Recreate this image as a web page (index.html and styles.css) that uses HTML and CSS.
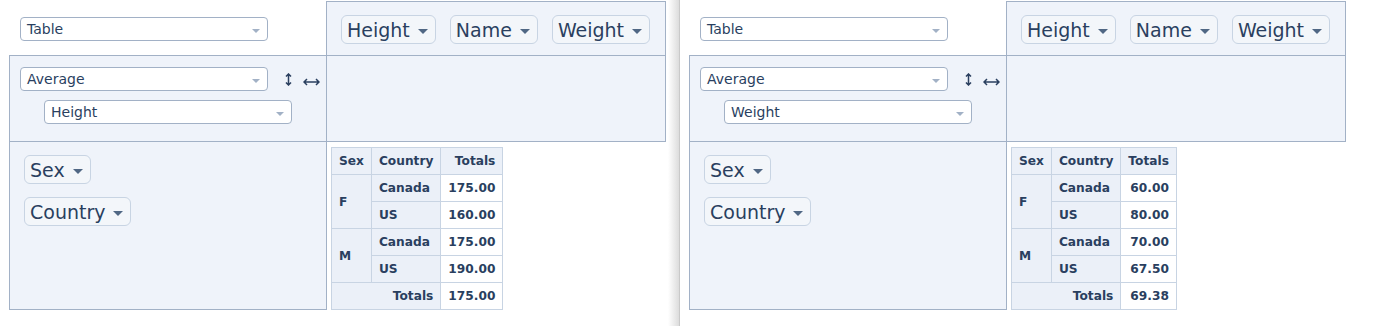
FILE: index.html
```
<!DOCTYPE html>
<html>
<head>
<meta charset="utf-8">
<link rel="stylesheet" href="styles.css">
</head>
<body>
<div class="split">
  <div class="pane">
    <div class="pivot">
      <div class="renderers">
        <div class="dd"><span>Table</span><i class="dd-icon"></i></div>
      </div>
      <div class="axis unused">
        <span class="attr">Height<i class="tri"></i></span>
        <span class="attr">Name<i class="tri"></i></span>
        <span class="attr">Weight<i class="tri"></i></span>
      </div>
      <div class="axis vals">
        <div class="vals-row">
          <div class="dd"><span>Average</span><i class="dd-icon"></i></div>
          <svg class="order-v" width="7" height="13" viewBox="0 0 7 13"><path d="M3.5 1v11M1 3.6 3.5 1 6 3.6M1 9.4 3.5 12 6 9.4" fill="none" stroke="#2a3f5f" stroke-width="1.5"/></svg>
          <svg class="order-h" width="17" height="8" viewBox="0 0 17 8"><path d="M1 4h15M4 1 1 4l3 3M13 1l3 3-3 3" fill="none" stroke="#2a3f5f" stroke-width="1.5"/></svg>
        </div>
        <div class="dd dd-attr"><span>Height</span><i class="dd-icon"></i></div>
      </div>
      <div class="axis cols"></div>
      <div class="axis rows">
        <span class="attr">Sex<i class="tri"></i></span>
        <span class="attr">Country<i class="tri"></i></span>
      </div>
      <div class="output">
        <table class="pvt">
          <thead>
            <tr><th>Sex</th><th>Country</th><th class="total-label">Totals</th></tr>
          </thead>
          <tbody>
            <tr><th rowspan="2">F</th><th>Canada</th><td>175.00</td></tr>
            <tr><th>US</th><td>160.00</td></tr>
            <tr><th rowspan="2">M</th><th>Canada</th><td>175.00</td></tr>
            <tr><th>US</th><td>190.00</td></tr>
            <tr><th colspan="2" class="total-label">Totals</th><td>175.00</td></tr>
          </tbody>
        </table>
      </div>
    </div>
  </div>
  <div class="divider"></div>
  <div class="pane">
    <div class="pivot">
      <div class="renderers">
        <div class="dd"><span>Table</span><i class="dd-icon"></i></div>
      </div>
      <div class="axis unused">
        <span class="attr">Height<i class="tri"></i></span>
        <span class="attr">Name<i class="tri"></i></span>
        <span class="attr">Weight<i class="tri"></i></span>
      </div>
      <div class="axis vals">
        <div class="vals-row">
          <div class="dd"><span>Average</span><i class="dd-icon"></i></div>
          <svg class="order-v" width="7" height="13" viewBox="0 0 7 13"><path d="M3.5 1v11M1 3.6 3.5 1 6 3.6M1 9.4 3.5 12 6 9.4" fill="none" stroke="#2a3f5f" stroke-width="1.5"/></svg>
          <svg class="order-h" width="17" height="8" viewBox="0 0 17 8"><path d="M1 4h15M4 1 1 4l3 3M13 1l3 3-3 3" fill="none" stroke="#2a3f5f" stroke-width="1.5"/></svg>
        </div>
        <div class="dd dd-attr"><span>Weight</span><i class="dd-icon"></i></div>
      </div>
      <div class="axis cols"></div>
      <div class="axis rows">
        <span class="attr">Sex<i class="tri"></i></span>
        <span class="attr">Country<i class="tri"></i></span>
      </div>
      <div class="output">
        <table class="pvt">
          <thead>
            <tr><th>Sex</th><th>Country</th><th class="total-label">Totals</th></tr>
          </thead>
          <tbody>
            <tr><th rowspan="2">F</th><th>Canada</th><td>60.00</td></tr>
            <tr><th>US</th><td>80.00</td></tr>
            <tr><th rowspan="2">M</th><th>Canada</th><td>70.00</td></tr>
            <tr><th>US</th><td>67.50</td></tr>
            <tr><th colspan="2" class="total-label">Totals</th><td>69.38</td></tr>
          </tbody>
        </table>
      </div>
    </div>
  </div>
</div>
</body>
</html>
```

FILE: styles.css
```
* { box-sizing: border-box; }

body {
  margin: 0;
  background: #fff;
  font-family: "DejaVu Sans", Verdana, sans-serif;
  color: #2a3f5f;
}

.split {
  display: flex;
  height: 326px;
}

.pane {
  width: 666px;
  flex: none;
}

.divider {
  width: 14px;
  flex: none;
  background: linear-gradient(to right, #ffffff 0px, #ffffff 2px, #dcdcdc 13px);
  border-right: 1px solid #c9c9c9;
}

.pivot {
  margin-left: 9px;
  display: grid;
  grid-template-columns: 317px 340px;
  grid-template-rows: 55px 86px 169px;
}

.renderers {
  padding: 17px 0 0 11px;
}

.axis {
  border: 1px solid #a2b1c6;
  background: #eff3fa;
}

.unused {
  margin-top: 1px;
  margin-bottom: -1px;
  display: flex;
  align-items: flex-start;
  gap: 14px;
  padding: 13px 0 0 14px;
}

.vals {
  margin-right: -1px;
  margin-bottom: -1px;
  padding: 11px 0 0 10px;
  display: flex;
  flex-direction: column;
  align-items: flex-start;
  gap: 9px;
}

.vals-row {
  display: flex;
  align-items: center;
}

.order-v {
  margin-left: 17px;
  margin-top: 1px;
}

.order-h {
  margin-left: 11px;
  margin-top: 5px;
}

.dd-attr {
  margin-left: 24px;
}

.cols {
  margin-bottom: -1px;
}

.rows {
  margin-right: -1px;
  display: flex;
  flex-direction: column;
  align-items: flex-start;
  gap: 13px;
  padding: 13px 0 0 14px;
}

.output {
  padding: 6px 0 0 5px;
}

.dd {
  width: 248px;
  height: 24px;
  border: 1px solid #a2b1c6;
  border-radius: 4px;
  background: #fff;
  display: flex;
  align-items: center;
  justify-content: space-between;
  padding: 0 7px 0 6px;
  font-size: 14px;
}

.dd-icon {
  width: 0;
  height: 0;
  border-left: 4px solid transparent;
  border-right: 4px solid transparent;
  border-top: 4px solid #a2b1c6;
  margin-top: 3px;
}

.attr {
  display: inline-flex;
  align-items: center;
  gap: 8px;
  height: 29px;
  border: 1px solid #c8d4e3;
  border-radius: 6px;
  background: #f3f6fa;
  padding: 0 7px 0 5px;
  font-size: 19px;
  white-space: nowrap;
}

.tri {
  width: 0;
  height: 0;
  border-left: 5px solid transparent;
  border-right: 5px solid transparent;
  border-top: 5px solid #506784;
  margin-top: 3px;
}

.pvt {
  border-collapse: collapse;
  font-size: 12.2px;
  font-weight: bold;
  color: #2a3f5f;
}

.pvt th,
.pvt td {
  border: 1px solid #c8d4e3;
  padding: 0 7px;
  height: 27px;
  white-space: nowrap;
}

.pvt th {
  background: #ebf0f8;
  text-align: left;
}

.pvt th.total-label {
  text-align: right;
}

.pvt td {
  background: #fff;
  text-align: right;
}
```
